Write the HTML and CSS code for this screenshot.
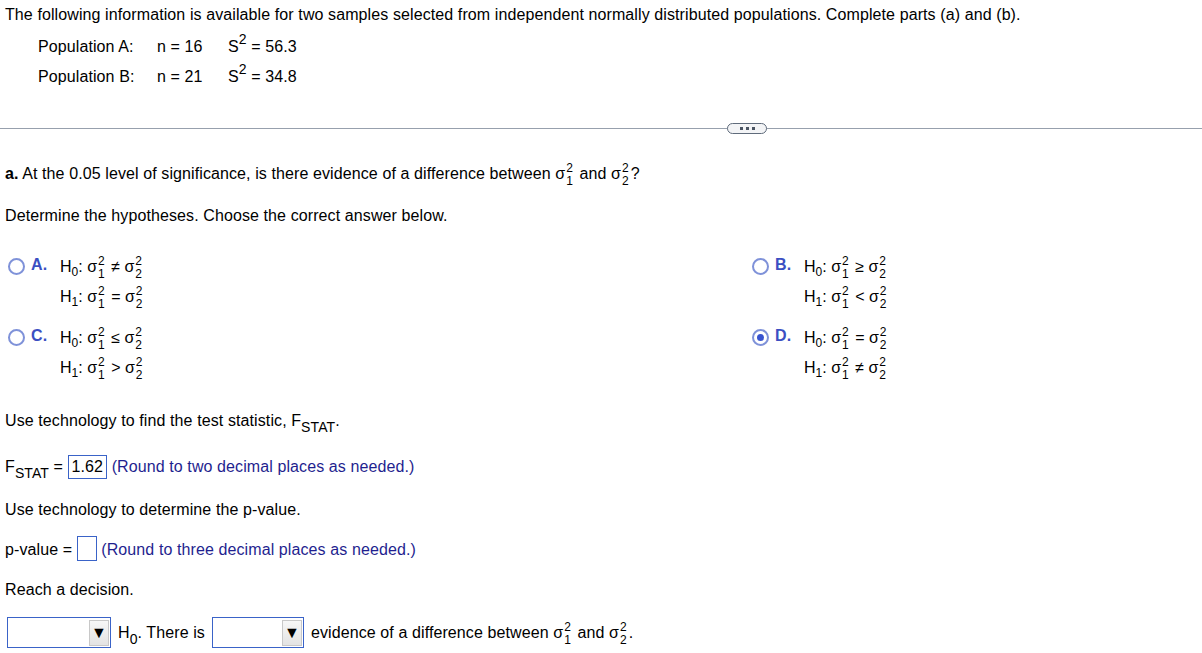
FILE: index.html
```html
<!DOCTYPE html>
<html>
<head>
	<meta name="viewport" content="width=device-width, initial-scale=1">
	<link rel="stylesheet" href="styles.css">
</head>
<body>
	<div class="intro">
		<p class="lead">The following information is available for two samples selected from independent normally distributed populations. Complete parts (a) and (b).</p>
		<div class="data">
			<div class="data-row">
				<span class="pop">Population A:</span>
				<span class="n">n = 16</span>
				<span class="s">S<sup>2</sup> = 56.3</span>
			</div>
			<div class="data-row">
				<span class="pop">Population B:</span>
				<span class="n">n = 21</span>
				<span class="s">S<sup>2</sup> = 34.8</span>
			</div>
		</div>
	</div>

	<div class="divider">
		<span class="pill"><i></i><i></i><i></i></span>
	</div>

	<div class="part">
		<p class="q"><b>a.</b> At the 0.05 level of significance, is there evidence of a difference between σ<span class="ss"><span>2</span><span>1</span></span> and σ<span class="ss"><span>2</span><span>2</span></span>?</p>
		<p class="q2">Determine the hypotheses. Choose the correct answer below.</p>

		<div class="options">
			<div class="option">
				<span class="radio"></span>
				<span class="letter">A.</span>
				<div class="hyp">
					<div>H<sub>0</sub>: σ<span class="ss"><span>2</span><span>1</span></span> ≠ σ<span class="ss"><span>2</span><span>2</span></span></div>
					<div>H<sub>1</sub>: σ<span class="ss"><span>2</span><span>1</span></span> = σ<span class="ss"><span>2</span><span>2</span></span></div>
				</div>
			</div>
			<div class="option">
				<span class="radio"></span>
				<span class="letter">B.</span>
				<div class="hyp">
					<div>H<sub>0</sub>: σ<span class="ss"><span>2</span><span>1</span></span> ≥ σ<span class="ss"><span>2</span><span>2</span></span></div>
					<div>H<sub>1</sub>: σ<span class="ss"><span>2</span><span>1</span></span> &lt; σ<span class="ss"><span>2</span><span>2</span></span></div>
				</div>
			</div>
			<div class="option">
				<span class="radio"></span>
				<span class="letter">C.</span>
				<div class="hyp">
					<div>H<sub>0</sub>: σ<span class="ss"><span>2</span><span>1</span></span> ≤ σ<span class="ss"><span>2</span><span>2</span></span></div>
					<div>H<sub>1</sub>: σ<span class="ss"><span>2</span><span>1</span></span> &gt; σ<span class="ss"><span>2</span><span>2</span></span></div>
				</div>
			</div>
			<div class="option">
				<span class="radio radio-on"></span>
				<span class="letter">D.</span>
				<div class="hyp">
					<div>H<sub>0</sub>: σ<span class="ss"><span>2</span><span>1</span></span> = σ<span class="ss"><span>2</span><span>2</span></span></div>
					<div>H<sub>1</sub>: σ<span class="ss"><span>2</span><span>1</span></span> ≠ σ<span class="ss"><span>2</span><span>2</span></span></div>
				</div>
			</div>
		</div>

		<p class="line t1">Use technology to find the test statistic, F<sub>STAT</sub>.</p>
		<p class="line t2">F<sub>STAT</sub> = <span class="answer">1.62</span> <span class="hint">(Round to two decimal places as needed.)</span></p>
		<p class="line t3">Use technology to determine the p-value.</p>
		<p class="line t4">p-value = <span class="blank"></span> <span class="hint">(Round to three decimal places as needed.)</span></p>
		<p class="line t5">Reach a decision.</p>
		<div class="decision">
			<span class="select select-1"><span class="arrow">▼</span></span>
			<span class="txt">H<sub>0</sub>. There is</span>
			<span class="select select-2"><span class="arrow">▼</span></span>
			<span class="txt">evidence of a difference between σ<span class="ss"><span>2</span><span>1</span></span> and σ<span class="ss"><span>2</span><span>2</span></span>.</span>
		</div>
	</div>
</body>
</html>
```

FILE: styles.css
```css
body {
	margin: 0;
	font-family: "Liberation Sans", Arial, sans-serif;
	font-size: 16px;
	letter-spacing: 0.1px;
	color: #000;
	background: #fff;
}

p {
	margin: 0;
}

sup, sub {
	font-size: 12px;
	line-height: 0;
}

.intro {
	padding: 6px 5px 0 5px;
}

.lead {
	line-height: 18px;
}

.data {
	margin-top: 8px;
	padding-left: 33px;
}

.data-row {
	display: flex;
	height: 30px;
	align-items: center;
}

.pop {
	width: 119px;
}

.n {
	width: 71px;
}

.s sup {
	font-size: 14px;
	position: relative;
	top: -2px;
}

.divider {
	margin-top: 36px;
	height: 1px;
	background: #97a0ad;
	position: relative;
}

.pill {
	position: absolute;
	left: 727px;
	top: -5px;
	width: 38px;
	height: 9px;
	border: 1px solid #5f6b7b;
	border-radius: 6px;
	background: #f3f4f6;
	display: flex;
	justify-content: center;
	align-items: center;
	gap: 3px;
}

.pill i {
	width: 3px;
	height: 3px;
	background: #4b5563;
}

.part {
	padding: 0 5px;
}

.q {
	margin-top: 35px;
	line-height: 20px;
}

.q2 {
	margin-top: 22px;
	line-height: 20px;
}

/* stacked superscript / subscript */
.ss {
	display: inline-flex;
	flex-direction: column;
	font-size: 12px;
	line-height: 13px;
	vertical-align: 7px;
	margin: -7px 2px -7px 1px;
	letter-spacing: 0;
}

.options {
	display: grid;
	grid-template-columns: 744px 1fr;
	row-gap: 12px;
	margin-top: 29px;
}

.option {
	display: flex;
	align-items: flex-start;
}

.radio {
	width: 13px;
	height: 13px;
	border: 2px solid #7f92d9;
	border-radius: 50%;
	margin-left: 3px;
	margin-top: 3px;
	box-sizing: content-box;
	position: relative;
}

.radio-on::after {
	content: "";
	position: absolute;
	left: 3px;
	top: 3px;
	width: 7px;
	height: 7px;
	border-radius: 50%;
	background: #3853cf;
}

.letter {
	font-weight: bold;
	color: #3b4fc2;
	margin-left: 6px;
	width: 29px;
	line-height: 20px;
}

.hyp div {
	height: 30px;
	line-height: 26px;
	font-size: 16px;
	letter-spacing: 0;
}

.hyp div:first-child {
	margin-top: -1px;
}

.hyp sub {
	font-size: 12px;
}

.line {
	line-height: 20px;
}

.t1 {
	margin-top: 26px;
}

.t2 {
	margin-top: 24px;
}

.t3 {
	margin-top: 21px;
}

.t4 {
	margin-top: 16px;
}

.t5 {
	margin-top: 19px;
}

.line sub {
	font-size: 14px;
	position: relative;
	top: 2px;
}

.answer {
	display: inline-block;
	border: 1px solid #3a63c8;
	padding: 1px 3px;
	line-height: 20px;
}

.hint {
	color: #1f1f8f;
}

.blank {
	display: inline-block;
	width: 18px;
	height: 23px;
	border: 1px solid #3a63c8;
	vertical-align: -6px;
}

.decision {
	display: flex;
	align-items: center;
	margin-top: 17px;
	padding-left: 2px;
}

.select {
	height: 29px;
	border: 1px solid #3a63c8;
	display: flex;
	justify-content: flex-end;
	align-items: center;
	padding-right: 1px;
	box-sizing: content-box;
}

.select-1 {
	width: 101px;
}

.select-2 {
	width: 89px;
}

.arrow {
	width: 18px;
	height: 24px;
	background: linear-gradient(#f7f7f7, #e3e3e3);
	border: 1px solid #c8c8c8;
	font-size: 16px;
	display: flex;
	align-items: center;
	justify-content: center;
	color: #000;
}

.txt {
	margin: 0 7px;
}

.txt sub {
	font-size: 14px;
	position: relative;
	top: 2px;
}
```
